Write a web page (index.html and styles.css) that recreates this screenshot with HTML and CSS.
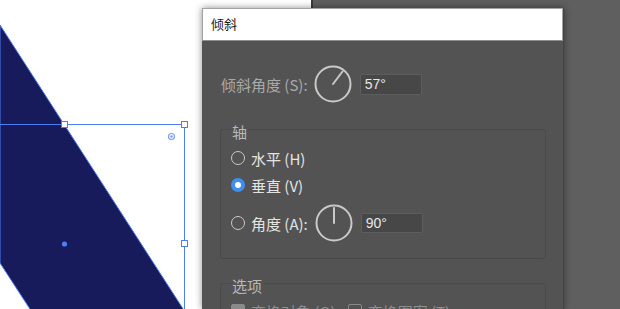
FILE: index.html
```html
<!DOCTYPE html>
<html lang="zh">
<head>
<meta charset="utf-8">
<title>倾斜</title>
<link rel="stylesheet" href="styles.css">
</head>
<body>
<div class="workspace">
  <div class="canvas">
    <svg class="art" width="311" height="309" viewBox="0 0 311 309">
      <polygon points="0,25 210,350.6 57,350.6 0,263" fill="#171b5b" stroke="#4f7df2" stroke-width="1"/>
      <line x1="0" y1="124.5" x2="184.5" y2="124.5" stroke="#4f7df2" stroke-width="1"/>
      <line x1="184.5" y1="124.5" x2="184.5" y2="309" stroke="#4f7df2" stroke-width="1"/>
      <rect x="61.5" y="121.5" width="6" height="6" fill="#fff" stroke="#4f7df2"/>
      <rect x="181.5" y="121.5" width="6" height="6" fill="#fff" stroke="#4f7df2"/>
      <rect x="181.5" y="240.5" width="6" height="6" fill="#fff" stroke="#4f7df2"/>
      <circle cx="64.5" cy="244" r="2.6" fill="#4f7df2"/>
      <circle cx="171.5" cy="136.5" r="3" fill="none" stroke="#7e9ff5" stroke-width="1.2"/>
      <circle cx="171.5" cy="136.5" r="1.3" fill="#7e9ff5"/>
    </svg>
  </div>
  <div class="panel"></div>
</div>

<div class="dialog">
  <div class="titlebar">倾斜</div>
  <div class="dialog-body">
    <div class="row angle-row">
      <span class="label">倾斜角度 (S):</span>
      <svg class="dial" width="38" height="38" viewBox="0 0 38 38">
        <circle cx="19" cy="19" r="17.5" fill="none" stroke="#c9c9c9" stroke-width="2"/>
        <line x1="19" y1="19" x2="28.5" y2="6.5" stroke="#c9c9c9" stroke-width="2" stroke-linecap="round"/>
      </svg>
      <div class="field">57°</div>
    </div>

    <div class="group axis">
      <div class="legend">轴</div>
      <div class="row radio-row first">
        <span class="radio"></span>
        <span class="opt">水平 (H)</span>
      </div>
      <div class="row radio-row">
        <span class="radio checked"></span>
        <span class="opt">垂直 (V)</span>
      </div>
      <div class="row radio-row dial-row">
        <span class="radio"></span>
        <span class="opt">角度 (A):</span>
        <svg class="dial dial2" width="38" height="38" viewBox="0 0 38 38">
          <circle cx="19" cy="19" r="17.5" fill="none" stroke="#c9c9c9" stroke-width="2"/>
          <line x1="19" y1="19" x2="19" y2="4" stroke="#c9c9c9" stroke-width="2" stroke-linecap="round"/>
        </svg>
        <div class="field field2">90°</div>
      </div>
    </div>

    <div class="group options">
      <div class="legend">选项</div>
      <div class="row check-row">
        <span class="check checked"></span>
        <span class="copt">变换对象 (O)</span>
        <span class="check"></span>
        <span class="copt">变换图案 (T)</span>
      </div>
    </div>
  </div>
</div>
</body>
</html>
```

FILE: styles.css
```css
html, body {
  margin: 0;
  padding: 0;
}
body {
  width: 620px;
  height: 309px;
  overflow: hidden;
  position: relative;
  font-family: "Noto Sans CJK SC", "Noto Sans", sans-serif;
}
.workspace {
  display: flex;
  width: 620px;
  height: 309px;
}
.canvas {
  width: 311px;
  height: 309px;
  background: #ffffff;
  flex: none;
}
.art {
  display: block;
}
.panel {
  flex: 1;
  background: #5f5f5f;
  border-left: 2px solid #3a3a3a;
}

.dialog {
  position: absolute;
  left: 202px;
  top: 8px;
  width: 362px;
  height: 301px;
  overflow: hidden;
  background: #535353;
  box-shadow: 0 0 7px rgba(0, 0, 0, 0.45);
  border-right: 1px solid #444;
  box-sizing: border-box;
}
.titlebar {
  height: 33px;
  box-sizing: border-box;
  background: #ffffff;
  border: 1px solid #a3a3a3;
  border-bottom: 1px solid #8e8e8e;
  padding-left: 8px;
  font-size: 13px;
  line-height: 30px;
  color: #1b1b1b;
}
.dialog-body {
  padding-top: 24px;
}
.row {
  display: flex;
  align-items: center;
}
.angle-row {
  padding-left: 19px;
  height: 38px;
}
.label {
  font-size: 15px;
  color: #a9a9a9;
  white-space: nowrap;
}
.dial {
  display: block;
  flex: none;
  margin-left: 6px;
}
.field {
  margin-left: 8px;
  width: 62px;
  height: 21px;
  box-sizing: border-box;
  background: #474747;
  border: 1px solid #5d5d5d;
  border-radius: 2px;
  color: #e6e6e6;
  font-family: "Liberation Sans", Arial, sans-serif;
  font-size: 14px;
  line-height: 19px;
  padding-left: 4px;
}
.field2 {
  height: 20px;
  line-height: 18px;
  margin-left: 8px;
}

.group {
  margin-left: 18px;
  width: 326px;
  box-sizing: border-box;
  border: 1px solid #4a4a4a;
  border-radius: 3px;
  padding-left: 10px;
}
.axis {
  margin-top: 26px;
  padding-bottom: 16px;
}
.options {
  margin-top: 24px;
  height: 60px;
}
.legend {
  margin-top: -7px;
  height: 18px;
  line-height: 18px;
  width: fit-content;
  padding: 0 1px;
  background: #535353;
  font-size: 15px;
  color: #b9b9b9;
}
.radio-row {
  height: 20px;
  margin-top: 7px;
}
.radio-row.dial-row {
  height: 38px;
  margin-top: 9px;
}
.radio {
  width: 14px;
  height: 14px;
  box-sizing: border-box;
  border: 1.6px solid #c8c8c8;
  border-radius: 50%;
  flex: none;
  margin-right: 6px;
}
.radio.checked {
  border: 4.5px solid #3e8ff0;
  background: #ffffff;
}
.opt {
  font-size: 15px;
  color: #e4e4e4;
  white-space: nowrap;
}
.dial2 {
  margin-left: 7px;
}
.check-row {
  margin-top: 9px;
  height: 14px;
}
.check {
  width: 14px;
  height: 14px;
  box-sizing: border-box;
  border: 1.5px solid #8a8a8a;
  border-radius: 2px;
  flex: none;
  margin-right: 6px;
}
.check.checked {
  background: #8a8a8a;
}
.copt {
  font-size: 15px;
  color: #8e8e8e;
  white-space: nowrap;
  margin-right: 12px;
}
```
